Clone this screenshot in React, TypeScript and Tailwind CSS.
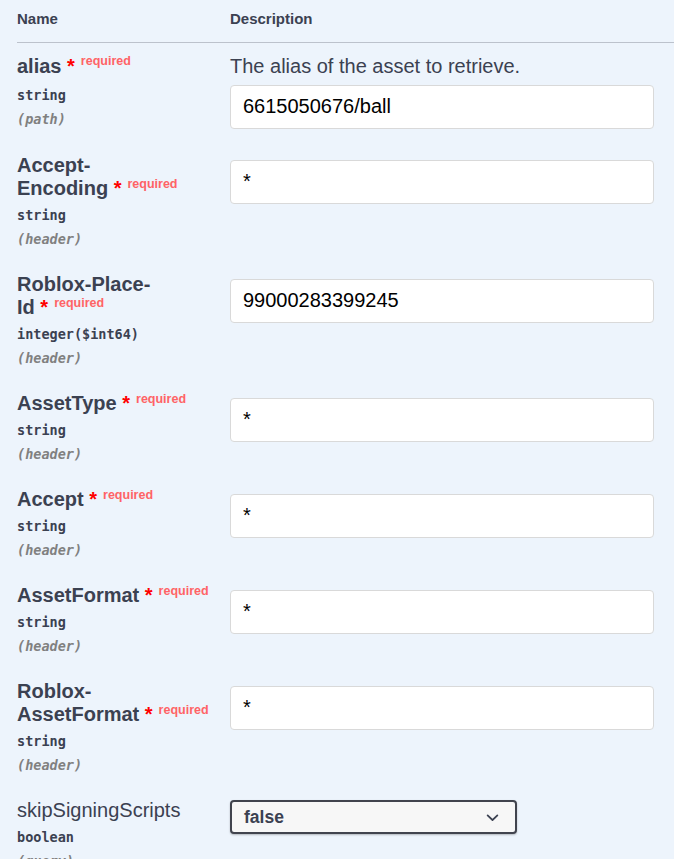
import React from 'react';

type Param = {
  name: string;
  required: boolean;
  type: string;
  location: string;
  description?: string;
  value?: string;
  options?: boolean;
};

const params: Param[] = [
  { name: 'alias', required: true, type: 'string', location: 'path', description: 'The alias of the asset to retrieve.', value: '6615050676/ball' },
  { name: 'Accept-Encoding', required: true, type: 'string', location: 'header', value: '*' },
  { name: 'Roblox-Place-Id', required: true, type: 'integer($int64)', location: 'header', value: '99000283399245' },
  { name: 'AssetType', required: true, type: 'string', location: 'header', value: '*' },
  { name: 'Accept', required: true, type: 'string', location: 'header', value: '*' },
  { name: 'AssetFormat', required: true, type: 'string', location: 'header', value: '*' },
  { name: 'Roblox-AssetFormat', required: true, type: 'string', location: 'header', value: '*' },
  { name: 'skipSigningScripts', required: false, type: 'boolean', location: 'query', value: 'false', options: true },
];

const sans = "font-['Liberation_Sans',Arial,sans-serif]";
const mono = "font-['DejaVu_Sans_Mono','Liberation_Mono',monospace]";

function Chevron() {
  return (
    <svg width="25" height="25" viewBox="0 0 20 20" className="shrink-0">
      <path
        fill="#3b4151"
        d="M13.418 7.859a.695.695 0 01.978 0 .68.68 0 010 .969l-3.908 3.83a.697.697 0 01-.979 0l-3.908-3.83a.68.68 0 010-.969.695.695 0 01.978 0L10 11z"
      />
    </svg>
  );
}

function ParamRow({ p, first }: { p: Param; first: boolean }) {
  return (
    <div className="flex pt-[11.5px] pb-[14px]">
      <div className="w-[213px] shrink-0">
        <div className={`text-[20px] leading-[23px] text-[#3b4151] ${p.required ? 'font-bold' : 'font-normal'}`}>
          {p.name}
          {p.required && (
            <>
              <span className="text-[#ff0000]">&nbsp;*</span>
              <span className="relative -top-[7.5px] px-[6px] text-[12.5px] leading-none text-[#ff6366]">required</span>
            </>
          )}
        </div>
        <div className={`${mono} ${first ? 'pt-[8px]' : 'pt-[5.5px]'} text-[13.5px] leading-[18px] font-bold text-[#3b4151]`}>{p.type}</div>
        <div className={`${mono} pt-[6px] text-[13.5px] leading-[18px] font-bold italic text-[#808080]`}>({p.location})</div>
      </div>
      <div className="flex-1 pr-[20px]">
        {p.description && (
          <p className="mb-[7px] text-[20px] leading-[23px] text-[#3b4151]">{p.description}</p>
        )}
        {p.options ? (
          <div className="mt-[1px] flex h-[34px] w-[287px] items-center justify-between rounded-[4px] border-2 border-[#41444e] bg-[#f7f7f7] pl-[12px] pr-[10.5px] shadow-[0_1px_2px_0_rgba(0,0,0,0.25)]">
            <span className="text-[17.5px] font-bold text-[#3b4151]">{p.value}</span>
            <Chevron />
          </div>
        ) : (
          <input
            defaultValue={p.value}
            className={`${sans} ${first ? '' : 'mt-[5.5px]'} block h-[44px] w-full rounded-[4px] border border-[#d9d9d9] bg-white px-[12px] text-[20px] text-black outline-none`}
          />
        )}
      </div>
    </div>
  );
}

export default function App() {
  return (
    <div className={`${sans} h-[859px] overflow-hidden bg-[#edf4fc]`}>
      <div className="ml-[17px]">
        <div className="flex h-[43px] border-b border-[#bcc2cc] pt-[10px] text-[15px] font-bold leading-[17px] text-[#3b4151]">
          <div className="w-[213px] shrink-0">Name</div>
          <div className="flex-1">Description</div>
        </div>
        {params.map((p, i) => (
          <ParamRow key={p.name} p={p} first={i === 0} />
        ))}
      </div>
    </div>
  );
}
